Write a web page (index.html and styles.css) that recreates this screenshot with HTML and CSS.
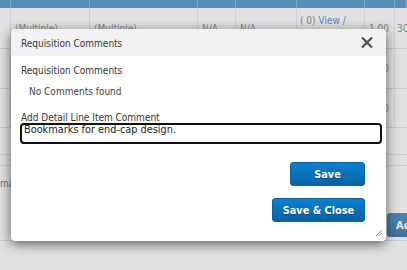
FILE: index.html
```html
<!DOCTYPE html>
<html>
<head>
<meta charset="utf-8">
<link rel="stylesheet" href="styles.css">
</head>
<body>
<div class="page">
  <div class="grid head">
    <div class="hc"></div><div class="hc"></div><div class="hc"></div><div class="hc"></div><div class="hc"></div><div class="hc"></div><div class="hc"></div><div class="hc last"></div>
  </div>
  <div class="grid row r1">
    <div class="c"></div>
    <div class="c">(Multiple)</div>
    <div class="c">(Multiple)</div>
    <div class="c">N/A</div>
    <div class="c">N/A</div>
    <div class="c pad3">( 0) <span class="link">View /</span><br><span class="link">Edit</span></div>
    <div class="c num">1.00</div>
    <div class="c last">30</div>
  </div>
  <div class="grid row">
    <div class="c"></div><div class="c"></div><div class="c"></div><div class="c"></div><div class="c"></div><div class="c"></div>
    <div class="c num">1.00</div>
    <div class="c last"></div>
  </div>
  <div class="grid row r3">
    <div class="c"></div><div class="c"></div><div class="c"></div><div class="c"></div><div class="c"></div><div class="c"></div>
    <div class="c num">1.00</div>
    <div class="c last"></div>
  </div>
  <div class="band band1"></div>
  <div class="band band2"></div>
  <div class="info">mation</div>
  <div class="actions"><button class="bgbtn">Ad</button></div>
  <div class="band band3"></div>
</div>

<div class="dialog">
  <div class="titlebar">
    <span class="title">Requisition Comments</span>
    <svg class="close" width="12" height="11" viewBox="0 0 12 11"><path d="M1 0.5 L11 10.5 M11 0.5 L1 10.5" stroke="#505050" stroke-width="2.2" fill="none"/></svg>
  </div>
  <div class="dbody">
    <div class="label first">Requisition Comments</div>
    <div class="empty">No Comments found</div>
    <div class="label add">Add Detail Line Item Comment</div>
    <textarea class="comment">Bookmarks for end-cap design.</textarea>
    <div class="buttons">
      <button class="btn">Save</button>
      <button class="btn wide">Save &amp; Close</button>
    </div>
    <svg class="grip" width="7" height="6" viewBox="0 0 7 6"><path d="M6.5 0.5 L1 6 M6.5 3 L3.5 6" stroke="#8a8a8a" stroke-width="1" fill="none"/></svg>
  </div>
</div>
</body>
</html>
```

FILE: styles.css
```css
html, body {
  margin: 0;
  padding: 0;
}
body {
  width: 407px;
  height: 270px;
  overflow: hidden;
  position: relative;
  background: #e1e1e1;
  font-family: "DejaVu Sans Condensed", "DejaVu Sans", sans-serif;
  font-size: 10px;
  color: #333;
}
.page {
  width: 407px;
}
.grid {
  display: grid;
  grid-template-columns: 11px 79px 108px 38px 61px 68px 30px 1fr;
}
.head {
  height: 8px;
  background: #5a8eb8;
}
.hc {
  border-right: 1px solid #7ea8ca;
}
.row {
  height: 40px;
  border-bottom: 1px solid #cbcbcb;
  box-sizing: border-box;
}
.r1 {
  height: 41px;
}
.r3 {
  height: 39px;
}
.c {
  border-right: 1px solid #cfcfcf;
  display: flex;
  align-items: center;
  padding-left: 4px;
  color: #858585;
  line-height: 13px;
  white-space: nowrap;
}
.c.pad3 {
  padding-left: 3px;
  display: block;
  padding-top: 6px;
}
.c.num {
  justify-content: flex-end;
  padding-right: 5px;
  padding-left: 0;
}
.c.last {
  border-right: none;
  padding-left: 2px;
}
.link {
  color: #6483b2;
}
.band {
  border-bottom: 1px solid #cbcbcb;
}
.band1 {
  height: 26px;
}
.band2 {
  height: 10px;
}
.info {
  padding-top: 11px;
  height: 47px;
  box-sizing: border-box;
  color: #707070;
  font-size: 10px;
  line-height: 13px;
}
.actions {
  display: flex;
  padding-left: 387px;
  height: 27px;
}
.bgbtn {
  width: 40px;
  height: 24px;
  border: none;
  border-radius: 3px;
  background: linear-gradient(#4f83af, #41729b);
  color: #e6edf3;
  font-family: inherit;
  font-weight: bold;
  font-size: 11px;
  text-align: left;
  padding: 0 0 0 9px;
}
.band3 {
  height: 0;
}

.dialog {
  position: absolute;
  left: 11px;
  top: 29px;
  width: 375px;
  height: 212px;
  background: #fff;
  border-radius: 4px;
  box-shadow: 0 3px 12px rgba(0, 0, 0, 0.6);
  display: flex;
  flex-direction: column;
}
.titlebar {
  height: 27px;
  background: #f2f2f2;
  border-radius: 4px 4px 0 0;
  display: flex;
  align-items: center;
  justify-content: space-between;
  padding: 0 13px 0 10px;
  box-sizing: border-box;
}
.title {
  font-size: 10px;
  color: #3a3a3a;
  padding-top: 2px;
}
.close {
  display: block;
}
.dbody {
  flex: 1;
  display: flex;
  flex-direction: column;
  padding: 0 4px 0 9px;
}
.label {
  line-height: 11px;
  color: #333;
  padding-left: 1px;
}
.label.first {
  margin-top: 9px;
}
.empty {
  margin-top: 10px;
  line-height: 11px;
  padding-left: 9px;
  color: #444;
}
.label.add {
  margin-top: 15px;
}
.comment {
  display: block;
  width: 362px;
  height: 21px;
  box-sizing: border-box;
  margin: 0;
  border: 2px solid #111;
  border-radius: 4px;
  padding: 0 2px;
  font-family: "DejaVu Sans", sans-serif;
  font-size: 9.75px;
  line-height: 10px;
  color: #222;
  resize: none;
  overflow: hidden;
  outline: none;
}
.buttons {
  display: flex;
  flex-direction: column;
  align-items: flex-end;
  gap: 12px;
  margin-top: 18px;
  margin-right: 17px;
}
.btn {
  min-width: 75px;
  height: 24px;
  padding: 0 10px;
  border: 1px solid #0a63a3;
  border-radius: 3px;
  background: linear-gradient(#0d80cd, #0763a4);
  color: #fff;
  font-family: "DejaVu Sans Condensed", "DejaVu Sans", sans-serif;
  font-weight: bold;
  font-size: 10.8px;
  text-shadow: 0 1px 1px rgba(0, 0, 0, 0.35);
}
.grip {
  display: block;
  margin-top: auto;
  align-self: flex-end;
  margin-bottom: 5px;
}
```
